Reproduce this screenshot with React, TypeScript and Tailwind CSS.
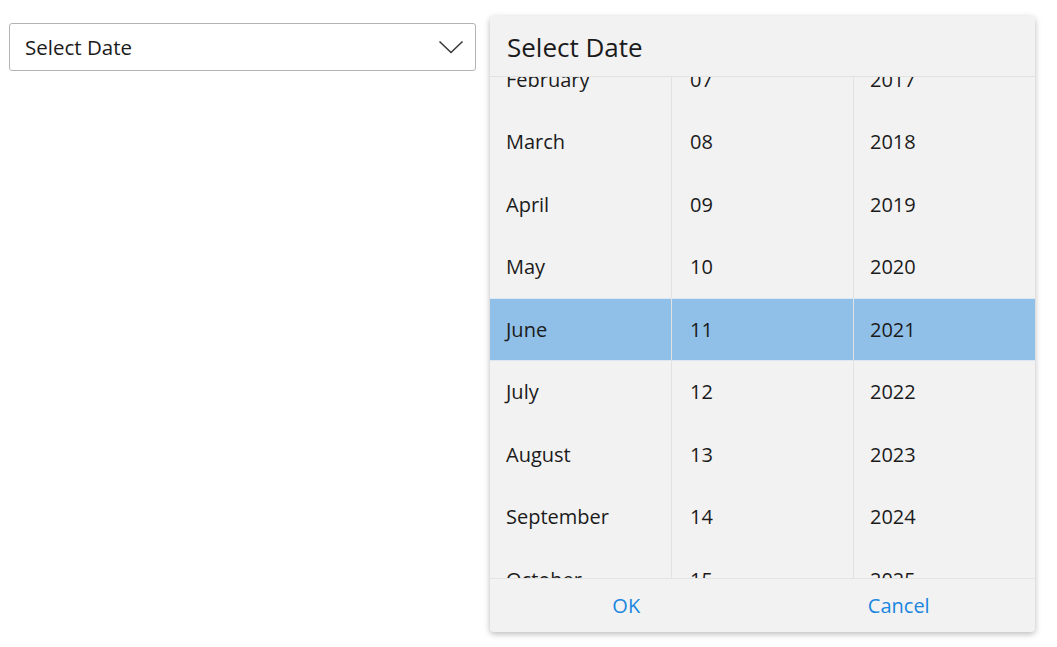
import React from "react";

const months = ["February", "March", "April", "May", "June", "July", "August", "September", "October"];
const days = ["07", "08", "09", "10", "11", "12", "13", "14", "15"];
const years = ["2017", "2018", "2019", "2020", "2021", "2022", "2023", "2024", "2025"];
const selected = 4;

function Column({ items, pad, last }: { items: string[]; pad: string; last?: boolean }) {
  return (
    <div className={`flex-1 flex flex-col -mt-[29px] ${last ? "" : "border-r border-[#e2e2e2]"}`}>
      {items.map((t, i) => (
        <div
          key={t}
          className={`h-[62.5px] shrink-0 flex items-center pt-[1px] ${pad} ${
            i === selected ? "bg-[#90c0e8] border-y border-[#dbe7f2]" : ""
          }`}
        >
          {t}
        </div>
      ))}
    </div>
  );
}

export default function App() {
  return (
    <div
      className="min-h-screen bg-white flex items-start text-[#1b1b1b]"
      style={{ fontFamily: '"Open Sans", "Noto Sans", sans-serif' }}
    >
      <div className="ml-[9px] mt-[23px] w-[467px] h-[48px] border border-[#b4b4b4] rounded-[3px] flex items-center justify-between pl-[15px] pr-[11px] text-[20.5px]">
        <span className="pt-[1px]">Select Date</span>
        <svg width="26" height="16" viewBox="0 0 26 16" fill="none">
          <path d="M1.5 2.5 L13 13.5 L24.5 2.5" stroke="#3a3a3a" strokeWidth="1.6" />
        </svg>
      </div>

      <div className="ml-[14px] mt-[16px] w-[545px] h-[616px] bg-[#f2f2f2] rounded-[4px] shadow-[0_2px_6px_rgba(0,0,0,0.28)] flex flex-col overflow-hidden">
        <div className="h-[61px] shrink-0 border-b border-[#e2e2e2] flex items-center pl-[17px] pt-[3px] text-[26px]">
          Select Date
        </div>
        <div className="flex-1 overflow-hidden flex text-[20px]">
          <Column items={months} pad="pl-[16px]" />
          <Column items={days} pad="pl-[18px]" />
          <Column items={years} pad="pl-[16px]" last />
        </div>
        <div className="h-[54px] shrink-0 border-t border-[#e4e4e4] flex text-[20px] text-[#1a86e0]">
          <button className="flex-1 flex items-center justify-center">OK</button>
          <button className="flex-1 flex items-center justify-center">Cancel</button>
        </div>
      </div>
    </div>
  );
}
